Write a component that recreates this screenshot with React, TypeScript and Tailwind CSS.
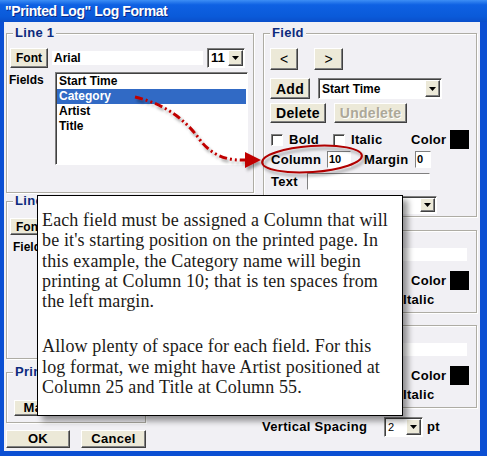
import type { ReactNode } from 'react';

const sunken = 'border border-t-[#808080] border-l-[#808080] border-r-white border-b-white';
const raised =
  'border border-t-white border-l-white border-r-[#404040] border-b-[#404040] shadow-[inset_-1px_-1px_0_#808080]';
const label = 'text-[13px] font-bold tracking-[0.3px] leading-[14px]';

function Btn({ className = '', disabled = false, children }: { className?: string; disabled?: boolean; children?: ReactNode }) {
  return (
    <button
      type="button"
      className={`flex shrink-0 items-center justify-center bg-[#ece9d8] ${raised} ${
        disabled ? 'text-[#aca899] [text-shadow:1px_1px_0_#ffffff]' : 'text-black'
      } ${className}`}
    >
      {children}
    </button>
  );
}

function DropArrow() {
  return (
    <div className={`flex h-full w-[15px] shrink-0 items-center justify-center bg-[#ece9d8] ${raised}`}>
      <svg width="7" height="4" viewBox="0 0 7 4">
        <path d="M0 0h7L3.5 4z" fill="#000" />
      </svg>
    </div>
  );
}

function Select({ className = '', value = '', text = 'text-[12px] font-bold' }: { className?: string; value?: string; text?: string }) {
  return (
    <div className={`flex shrink-0 bg-white p-[1px] ${sunken} shadow-[inset_1px_1px_0_#404040] ${className}`}>
      <div className={`flex flex-1 items-center pl-[2px] ${text}`}>{value}</div>
      <DropArrow />
    </div>
  );
}

function TextBox({ className = '', value = '' }: { className?: string; value?: string }) {
  return (
    <div className={`flex shrink-0 items-center bg-white pl-[1px] text-[11px] font-bold ${sunken} ${className}`}>
      {value}
    </div>
  );
}

function Check() {
  return <div className={`h-[12px] w-[12px] shrink-0 bg-white ${sunken} shadow-[inset_1px_1px_0_#404040]`} />;
}

function Swatch() {
  return <div className="h-[19px] w-[19px] shrink-0 bg-black" />;
}

function Group({ legend, className = '', children }: { legend?: string; className?: string; children: ReactNode }) {
  return (
    <div className={`flex flex-col border border-[#aeaca4] shadow-[inset_1px_1px_0_#ffffff,1px_1px_0_#ffffff] ${className}`}>
      {legend && (
        <div className={`-mt-[8px] ml-[6px] w-fit bg-[#f1f0f4] px-[2px] text-[#0c2a7d] ${label}`}>{legend}</div>
      )}
      {children}
    </div>
  );
}

function ListBox({ items, selected }: { items: string[]; selected: number }) {
  return (
    <div className={`h-[93px] w-[193px] shrink-0 bg-white p-[1px] ${sunken} shadow-[inset_1px_1px_0_#404040]`}>
      {items.map((item, i) => (
        <div
          key={item}
          className={`h-[15px] pl-[2px] text-[12px] font-bold leading-[15px] ${
            i === selected ? 'bg-[#316ac5] text-white' : 'text-black'
          }`}
        >
          {item}
        </div>
      ))}
    </div>
  );
}

function LineGroup({
  legend,
  className,
  btnRow,
  labelRow,
  font = '',
  size = '',
  items = [],
}: {
  legend: string;
  className: string;
  btnRow: string;
  labelRow: string;
  font?: string;
  size?: string;
  items?: string[];
}) {
  return (
    <Group legend={legend} className={className}>
      <div className={`ml-[3px] flex items-center gap-[4px] ${btnRow}`}>
        <Btn className="h-full w-[38px] text-[12px] font-bold">Font</Btn>
        <div className="flex h-[14px] w-[151px] items-center bg-white pl-[2px] text-[12px] font-bold">{font}</div>
        <Select className="h-full w-[38px]" value={size} text="text-[13px] font-bold" />
      </div>
      <div className={`mt-[4px] flex ${labelRow}`}>
        <div className="pt-[1px] text-[12px] font-bold leading-[14px]">Fields</div>
        <div className="flex-1" />
        <div className="mr-[5px]">
          <ListBox items={items} selected={1} />
        </div>
      </div>
    </Group>
  );
}

function FontGroup({ className }: { className: string }) {
  return (
    <Group className={className}>
      <div className="ml-[6px] mt-[13px] flex h-[20px] items-center gap-[6px]">
        <Btn className={`h-[20px] w-[38px] ${label}`} />
        <div className="h-[13px] w-[153px] bg-white" />
      </div>
      <div className="ml-[7px] mt-[7px] flex h-[19px] items-center">
        <div className="flex w-[140px] items-center">
          <Check />
        </div>
        <span className={`w-[39px] ${label}`}>Color</span>
        <Swatch />
      </div>
      <div className="ml-[7px] mt-[3px] flex h-[14px] items-center">
        <div className="flex w-[114px] items-center">
          <Check />
        </div>
        <Check />
        <span className={`ml-[6px] ${label}`}>Italic</span>
      </div>
    </Group>
  );
}

export default function App() {
  return (
    <div className="relative flex h-[456px] w-[487px] flex-col overflow-hidden bg-[#0b4fd3] font-['Liberation_Sans',Arial,sans-serif] text-black">
      <div className="flex h-[22px] shrink-0 items-center bg-[linear-gradient(180deg,#3d8ef5_0%,#0e61e3_22%,#0a5ad9_75%,#0a4fcb_100%)] pl-[5px] text-[14px] font-bold tracking-[-0.4px] text-white [text-shadow:1px_1px_0_#0a2a8a]">
        {'"Printed Log" Log Format'}
      </div>

      <div className="mb-[5px] ml-[4px] mr-[7px] flex flex-1 bg-[#f1f0f4]">
        {/* left column */}
        <div className="ml-[2px] flex w-[248px] flex-col">
          <LineGroup
            legend="Line 1"
            className="mt-[11px] pb-[27px]"
            btnRow="mt-[8px] h-[20px]"
            labelRow="ml-[2px]"
            font="Arial"
            size="11"
            items={['Start Time', 'Category', 'Artist', 'Title']}
          />
          <LineGroup legend="Line 2" className="mt-[8px] pb-[26px]" btnRow="mt-[10px] h-[17px]" labelRow="ml-[6px]" />

          <Group legend="Print" className="mt-[13px] w-[140px] pb-[6px]">
            <div className="ml-[7px] mt-[21px] flex gap-[8px]">
              <Btn className={`h-[16px] w-[71px] ${label}`}>Margins</Btn>
              <Btn className={`h-[16px] w-[47px] ${label}`} />
            </div>
          </Group>

          <div className="mt-[7px] flex gap-[11px]">
            <Btn className={`h-[18px] w-[64px] ${label}`}>OK</Btn>
            <Btn className={`h-[18px] w-[65px] ${label}`}>Cancel</Btn>
          </div>
        </div>

        {/* right column */}
        <div className="ml-[9px] flex w-[214px] flex-col">
          <Group legend="Field" className="mt-[11px] pb-[2px]">
            <div className="ml-[6px] mt-[8px] flex gap-[16px]">
              <Btn className="h-[22px] w-[28px] text-[14px]">&lt;</Btn>
              <Btn className="h-[22px] w-[29px] text-[14px]">&gt;</Btn>
            </div>
            <div className="ml-[6px] mt-[8px] flex h-[21px] gap-[8px]">
              <Btn className={`h-[21px] w-[40px] ${label} text-[14px]`}>Add</Btn>
              <Select className="h-[21px] w-[124px]" value="Start Time" />
            </div>
            <div className="ml-[6px] mt-[4px] flex h-[20px] gap-[8px]">
              <Btn className={`h-[20px] w-[56px] ${label} text-[14px]`}>Delete</Btn>
              <Btn disabled className={`h-[20px] w-[73px] ${label} text-[14px]`}>
                Undelete
              </Btn>
            </div>
            <div className="ml-[7px] mt-[7px] flex h-[19px] items-center">
              <div className="flex w-[62px] items-center">
                <Check />
                <span className={`ml-[6px] ${label}`}>Bold</span>
              </div>
              <div className="flex w-[78px] items-center">
                <Check />
                <span className={`ml-[6px] ${label}`}>Italic</span>
              </div>
              <span className={`w-[39px] ${label}`}>Color</span>
              <Swatch />
            </div>
            <div className="ml-[7px] mt-[2px] flex h-[17px] items-center">
              <span className={`w-[56px] ${label}`}>Column</span>
              <TextBox className="h-[17px] w-[24px]" value="10" />
              <span className={`ml-[13px] w-[51px] ${label}`}>Margin</span>
              <TextBox className="h-[17px] w-[16px]" value="0" />
            </div>
            <div className="ml-[7px] mt-[5px] flex h-[17px] items-center">
              <span className={`w-[36px] ${label}`}>Text</span>
              <TextBox className="h-[17px] w-[123px]" />
            </div>
            <div className="ml-[43px] mt-[6px] flex h-[18px] items-center">
              <Select className="h-[18px] w-[130px]" />
            </div>
          </Group>

          <FontGroup className="mt-[13px] pb-[5px]" />
          <FontGroup className="mt-[12px] pb-[5px]" />

          <div className="-ml-[1px] mt-[9px] flex h-[20px] items-center">
            <span className={`w-[122px] ${label}`}>Vertical Spacing</span>
            <Select className="h-[20px] w-[39px]" value="2" text="text-[11px]" />
            <span className={`ml-[4px] ${label}`}>pt</span>
          </div>
        </div>
      </div>

      {/* callout arrow and circle */}
      <svg className="pointer-events-none absolute left-0 top-0" width="487" height="456" viewBox="0 0 487 456">
        <defs>
          <filter id="drop" x="-20%" y="-20%" width="140%" height="160%">
            <feDropShadow dx="2" dy="3" stdDeviation="1.5" floodColor="#000" floodOpacity="0.35" />
          </filter>
        </defs>
        <g filter="url(#drop)">
          <path
            d="M135 97 C 165 104, 186 120, 200 140 C 212 156, 228 161, 247 160"
            fill="none"
            stroke="#c00000"
            strokeWidth="3"
            strokeDasharray="8 3 2 3 2 3"
          />
          <path d="M245 152 L261 160 L245 168 Z" fill="#c00000" />
          <ellipse cx="312" cy="159" rx="50" ry="13" fill="none" stroke="#b00000" strokeWidth="2" transform="rotate(-4 312 159)" />
        </g>
      </svg>

      {/* tooltip */}
      <div className="absolute left-[37px] top-[195px] h-[221px] w-[366px] border border-black bg-white pl-[4px] pt-[14px] font-['Liberation_Serif','Times_New_Roman',serif] text-[18px] leading-[20.3px] tracking-[0.13px] text-[#1c1a17] shadow-[5px_5px_6px_rgba(0,0,0,0.4)]">
        <p className="whitespace-nowrap">
          Each field must be assigned a Column that will
          <br />
          be it's starting position on the printed page. In
          <br />
          this example, the Category name will begin
          <br />
          printing at Column 10; that is ten spaces from
          <br />
          the left margin.
        </p>
        <p className="mt-[25px] whitespace-nowrap">
          Allow plenty of space for each field. For this
          <br />
          log format, we might have Artist positioned at
          <br />
          Column 25 and Title at Column 55.
        </p>
      </div>
    </div>
  );
}
